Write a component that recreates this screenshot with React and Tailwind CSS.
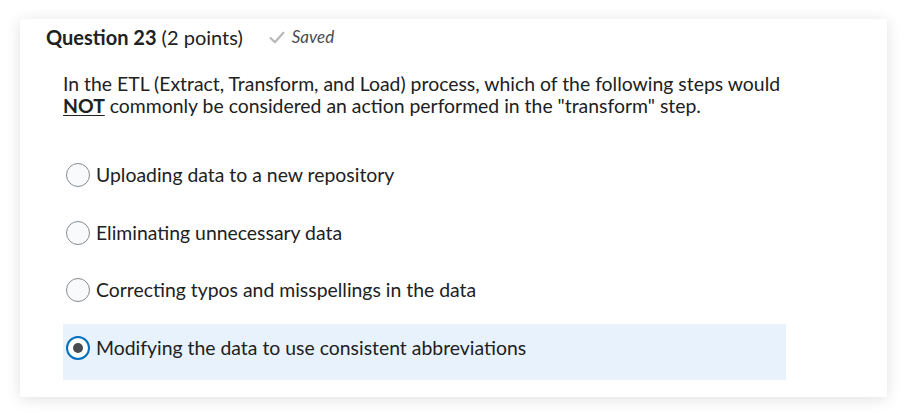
import { useState } from "react";

const options = [
  "Uploading data to a new repository",
  "Eliminating unnecessary data",
  "Correcting typos and misspellings in the data",
  "Modifying the data to use consistent abbreviations",
];

export default function App() {
  const [selected, setSelected] = useState(3);

  return (
    <div
      className="min-h-screen bg-white px-5 pt-[19px] text-[#202122]"
      style={{ fontFamily: "Lato, 'Noto Sans', sans-serif" }}
    >
      <div className="h-[378px] bg-white shadow-[0_2px_14px_rgba(0,0,0,0.12)] pl-[26px] pr-[100px]">
        {/* header */}
        <div className="flex items-center h-[36px]">
          <h2 className="text-[20px] leading-none">
            <span className="font-bold">Question 23</span>{" "}
            <span>(2 points)</span>
          </h2>
          <div className="flex items-center ml-[25px] text-[#494c4e]">
            <svg width="18" height="15" viewBox="0 0 16 14" className="mr-[6px]">
              <path
                d="M2 7.5 L6 11.5 L14 2.5"
                fill="none"
                stroke="#b5b7b9"
                strokeWidth="2"
                strokeLinecap="round"
                strokeLinejoin="round"
              />
            </svg>
            <span className="italic text-[17px]">Saved</span>
          </div>
        </div>

        {/* question */}
        <div className="ml-[17px] mt-[18px] w-[723px]">
          <p className="text-[19.4px] leading-[22px]">
            In the ETL (Extract, Transform, and Load) process, which of the following steps would{" "}
            <span className="font-bold underline underline-offset-2">NOT</span> commonly be
            considered an action performed in the "transform" step.
          </p>

          <div className="mt-[34px]">
            {options.map((opt, i) => {
              const isSel = selected === i;
              return (
                <label
                  key={opt}
                  onClick={() => setSelected(i)}
                  className={`flex items-start h-[56px] mb-[1.5px] pl-[3px] pt-[12px] cursor-pointer ${
                    isSel ? "bg-[#e8f2fd]" : ""
                  }`}
                >
                  <span className="flex items-center h-[24px]">
                    <span
                      className={`flex items-center justify-center w-[24px] h-[24px] rounded-full shrink-0 ${
                        isSel
                          ? "border-2 border-[#006fbf] bg-white"
                          : "border border-[#868c8f] bg-[#f9fafb]"
                      }`}
                    >
                      {isSel && <span className="w-[10px] h-[10px] rounded-full bg-[#494c4e]" />}
                    </span>
                    <span className="ml-[6px] text-[19.4px] leading-[24px]">{opt}</span>
                  </span>
                </label>
              );
            })}
          </div>
        </div>
      </div>
    </div>
  );
}
